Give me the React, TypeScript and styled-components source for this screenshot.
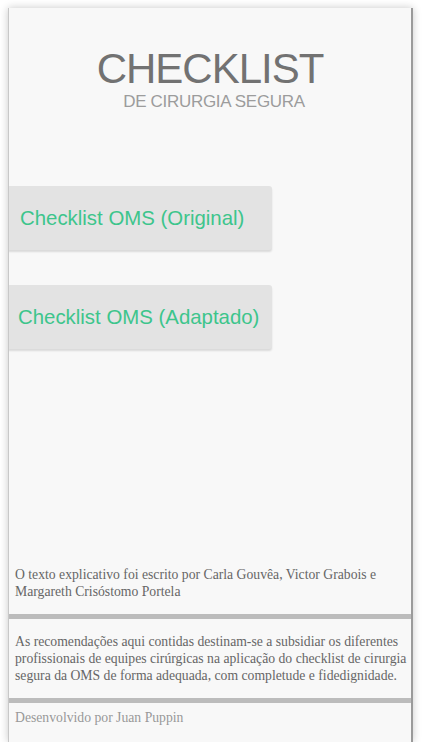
import styled, { createGlobalStyle } from "styled-components";

const Global = createGlobalStyle`
  html, body {
    margin: 0;
    padding: 0;
    background: #ffffff;
  }
`;

const Frame = styled.div`
  margin: 8px 0 0 8px;
  width: 405px;
  height: 734px;
  box-sizing: border-box;
  background: #f8f8f8;
  border-left: 1px solid #c8c8c8;
  border-right: 2px solid #9a9a9a;
  box-shadow: 0 0 8px rgba(0, 0, 0, 0.22);
  display: flex;
  flex-direction: column;
  overflow: hidden;
`;

const Logo = styled.div`
  margin-top: 39px;
  display: flex;
  flex-direction: column;
  align-items: center;
  font-family: "Liberation Sans", Arial, sans-serif;
`;

const LogoTitle = styled.div`
  font-size: 42px;
  line-height: 44px;
  letter-spacing: -1px;
  color: #727272;
`;

const LogoSub = styled.div`
  font-size: 17px;
  line-height: 18px;
  letter-spacing: -0.3px;
  color: #9c9c9c;
  margin-top: 2px;
  margin-left: 8px;
`;

const Menu = styled.div`
  margin-top: 75px;
  display: flex;
  flex-direction: column;
  gap: 35px;
`;

const MenuButton = styled.button<{ $indent: number }>`
  width: 264px;
  height: 64px;
  margin-left: -1px;
  border: none;
  border-radius: 0 3px 3px 0;
  background: #e3e3e3;
  box-shadow: 0 2px 2px rgba(0, 0, 0, 0.12);
  text-align: left;
  padding: 0 0 0 ${(p) => p.$indent}px;
  font-family: "Liberation Sans", Arial, sans-serif;
  font-size: 20.4px;
  color: #3dc58c;
  cursor: pointer;
`;

const Footer = styled.div`
  margin-top: auto;
  display: flex;
  flex-direction: column;
`;

const Section = styled.div<{ $pad: string; $light?: boolean }>`
  padding: ${(p) => p.$pad};
  font-family: "Liberation Serif", "Times New Roman", serif;
  font-size: 13.7px;
  line-height: 17px;
  color: ${(p) => (p.$light ? "#999999" : "#666666")};
`;

const Bar = styled.div`
  height: 5px;
  background: #bcbcbc;
`;

const App: React.FC = () => {
  return (
    <>
      <Global />
      <Frame>
        <Logo>
          <LogoTitle>CHECKLIST</LogoTitle>
          <LogoSub>DE CIRURGIA SEGURA</LogoSub>
        </Logo>
        <Menu>
          <MenuButton $indent={12}>Checklist OMS (Original)</MenuButton>
          <MenuButton $indent={10}>Checklist OMS (Adaptado)</MenuButton>
        </Menu>
        <Footer>
          <Section $pad="14px 0 14px 6px">
            O texto explicativo foi escrito por Carla Gouvêa, Victor Grabois e
            Margareth Crisóstomo Portela
          </Section>
          <Bar />
          <Section $pad="14px 0 14px 6px">
            As recomendações aqui contidas destinam-se a subsidiar os diferentes
            profissionais de equipes cirúrgicas na aplicação do checklist de
            cirurgia segura da OMS de forma adequada, com completude e
            fidedignidade.
          </Section>
          <Bar />
          <Section $pad="6px 0 16px 6px" $light>
            Desenvolvido por Juan Puppin
          </Section>
        </Footer>
      </Frame>
    </>
  );
};

export default App;
